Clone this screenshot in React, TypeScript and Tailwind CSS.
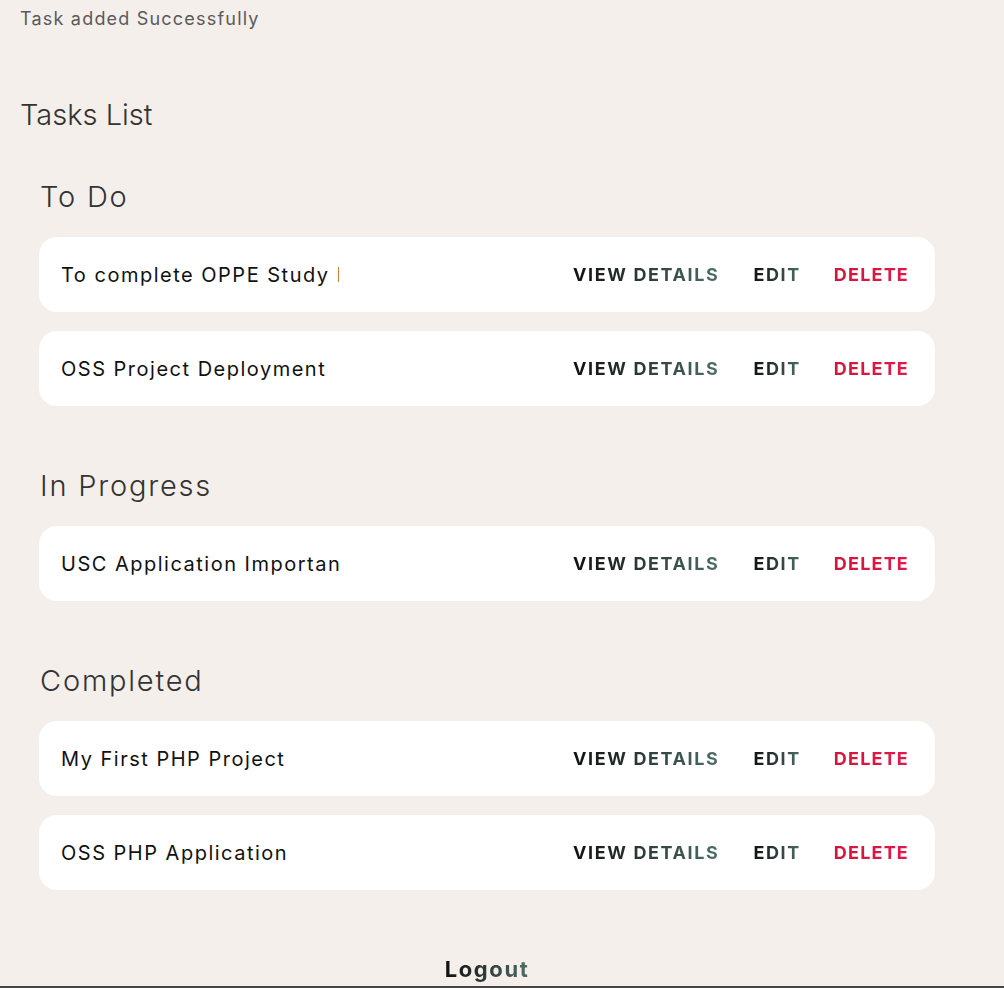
import React from 'react';

type Task = { id: number; title: string };

const sections: { name: string; tasks: Task[] }[] = [
  {
    name: 'To Do',
    tasks: [
      { id: 1, title: 'To complete OPPE Study Material' },
      { id: 2, title: 'OSS Project Deployment' },
    ],
  },
  {
    name: 'In Progress',
    tasks: [{ id: 3, title: 'USC Application Important Dates' }],
  },
  {
    name: 'Completed',
    tasks: [
      { id: 4, title: 'My First PHP Project' },
      { id: 5, title: 'OSS PHP Application' },
    ],
  },
];

const TaskRow = ({ task }: { task: Task }) => (
  <div className="flex items-center justify-between bg-white rounded-[18px] h-[75px] pl-[22px] pr-[26px]">
    <div className="w-[278px] overflow-hidden whitespace-nowrap text-[20px] tracking-[1.5px] text-[#111]">
      {task.title}
    </div>
    <div className="flex items-center text-[18px] font-bold tracking-[1.6px]">
      <a className="bg-gradient-to-r from-[#111] to-[#4d6e69] bg-clip-text text-transparent cursor-pointer">
        VIEW DETAILS
      </a>
      <a className="ml-[34px] bg-gradient-to-r from-[#111] to-[#4d6e69] bg-clip-text text-transparent cursor-pointer">
        EDIT
      </a>
      <a className="ml-[33px] tracking-[1.2px] bg-gradient-to-r from-[#d4143a] to-[#e3184a] bg-clip-text text-transparent cursor-pointer">
        DELETE
      </a>
    </div>
  </div>
);

const App = () => {
  return (
    <div
      className="min-h-[988px] bg-[#f4efeb] border-b-2 border-[#444] flex flex-col"
      style={{ fontFamily: '"Inter", "Liberation Sans", sans-serif' }}
    >
      <div className="px-[20px] pt-[7px]">
        <p className="text-[18px] leading-[24px] tracking-[1.2px] text-[#5a5a5a]">Task added Successfully</p>
        <h2 className="mt-[64px] text-[29px] leading-[40px] font-light text-[#333]">Tasks List</h2>
      </div>
      <div className="ml-[39px] w-[896px]">
        {sections.map((section, i) => (
          <div key={section.name} className={i === 0 ? 'mt-[42px]' : 'mt-[60px]'}>
            <h3 className="pl-[1px] text-[29px] leading-[40px] font-light tracking-[1.8px] text-[#333] mb-[20px]">
              {section.name}
            </h3>
            <div className="flex flex-col gap-[19px]">
              {section.tasks.map((t) => (
                <TaskRow key={t.id} task={t} />
              ))}
            </div>
          </div>
        ))}
      </div>
      <div className="mt-auto pb-[3px] pr-[30px] text-center">
        <a className="text-[22px] leading-[28px] font-bold tracking-[1.6px] bg-gradient-to-r from-[#111] to-[#4d6e69] bg-clip-text text-transparent cursor-pointer">
          Logout
        </a>
      </div>
    </div>
  );
};

export default App;
